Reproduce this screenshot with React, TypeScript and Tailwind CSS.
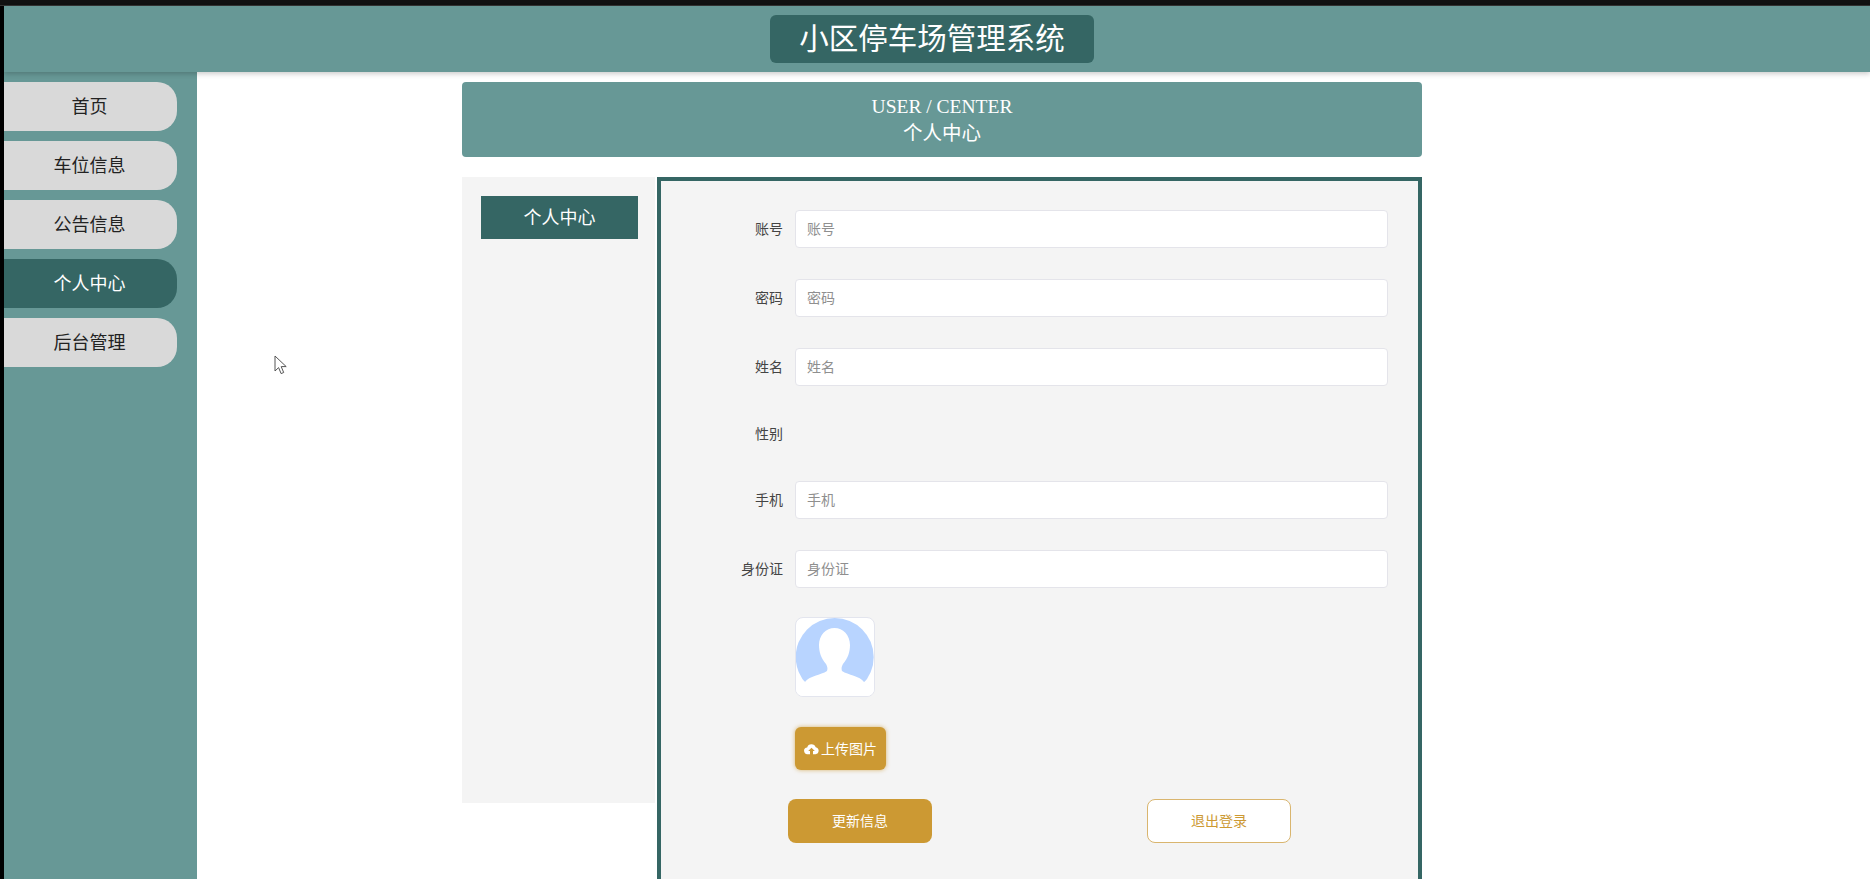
const navItems = ["首页", "车位信息", "公告信息", "个人中心", "后台管理"];

function Field({ label }: { label: string }) {
  return (
    <div className="flex h-[38px] items-center">
      <label className="w-[125px] pr-[12px] text-right text-sm text-[#444]">{label}</label>
      <input
        placeholder={label}
        className="h-[38px] w-[593px] rounded-[4px] border border-[#e4e4ea] bg-white px-[11px] text-sm text-[#333] outline-none placeholder:text-[#8f8f8f]"
      />
    </div>
  );
}

function Avatar() {
  return (
    <div className="h-[80px] w-[80px] overflow-hidden rounded-[8px] border border-[#e3e5ee] bg-white">
      <svg viewBox="1 1 78 78" className="h-full w-full">
        <circle cx="39.7" cy="40" r="39" fill="#b8d4ff" />
        <path
          d="M10 65C14 59 26 58 32 54C33 51 32 49 31 47C26 41 24 35 24 28C24 18 31 11 39.5 11C48 11 55 18 55 28C55 35 53 41 48 47C47 49 46 51 47 54C53 58 65 59 69 65L80 60V80H0V60Z"
          fill="#fff"
        />
      </svg>
    </div>
  );
}

function CloudIcon() {
  return (
    <svg viewBox="0 0 16 12" className="h-[12px] w-[15px]" fill="#fff">
      <path d="M4 11.5a3.6 3.6 0 0 1-.6-7.2A4.8 4.8 0 0 1 12.5 4a3.8 3.8 0 0 1-.2 7.5H9.6V8.2h1.9L8 4.6 4.5 8.2h1.9v3.3z" />
    </svg>
  );
}

export default function App() {
  return (
    <div className="relative flex h-[879px] flex-col overflow-hidden bg-white font-['Liberation_Sans','Noto_Sans_CJK_SC',sans-serif]">
      <div className="h-[6px] shrink-0 border-b border-[#333] bg-[#111]" />
      <div className="flex min-h-0 flex-1">
        <div className="w-[4px] shrink-0 bg-black" />
        <div className="flex min-w-0 flex-1 flex-col">
          <header className="relative z-10 flex h-[66px] shrink-0 items-center bg-[#679896] pl-[766px] shadow-[0_2px_5px_rgba(0,0,0,0.2)]">
            <h1 className="flex h-[48px] w-[324px] items-center justify-center rounded-[6px] bg-[#356664] text-[29.5px] font-normal text-white">
              小区停车场管理系统
            </h1>
          </header>
          <div className="flex min-h-0 flex-1">
            <nav className="flex w-[193px] shrink-0 flex-col gap-[10px] bg-[#679896] pt-[10px]">
              {navItems.map((item) => (
                <a
                  key={item}
                  className={
                    item === "个人中心"
                      ? "flex h-[49px] w-[173px] items-center justify-center rounded-r-[20px] bg-[#356664] pr-[2px] text-lg text-white"
                      : "flex h-[49px] w-[173px] items-center justify-center rounded-r-[20px] bg-[#d9d9d9] pr-[2px] text-lg text-[#222]"
                  }
                >
                  {item}
                </a>
              ))}
            </nav>
            <main className="flex-1 pl-[265px] pt-[10px]">
              <div className="flex h-[75px] w-[960px] flex-col items-center justify-center rounded-[4px] bg-[#679896] text-white">
                <div className="font-['Liberation_Serif','Noto_Sans_CJK_SC',serif] text-[19.5px] leading-[27px]">USER / CENTER</div>
                <div className="text-[19.5px] leading-[27px]">个人中心</div>
              </div>
              <div className="mt-[20px] flex w-[960px] items-start">
                <aside className="h-[626px] w-[193px] shrink-0 bg-[#f4f4f4] pl-[19px] pt-[19px]">
                  <div className="flex h-[43px] w-[157px] items-center justify-center bg-[#356664] text-lg text-white">个人中心</div>
                </aside>
                <form className="ml-[2px] h-[800px] w-[765px] border-4 border-[#356664] bg-[#f4f4f4] pl-[9px] pt-[29px]">
                  <div className="flex flex-col gap-[31px]">
                    <Field label="账号" />
                    <Field label="密码" />
                    <Field label="姓名" />
                  </div>
                  <div className="flex h-[95px] items-center">
                    <label className="w-[125px] pr-[12px] text-right text-sm text-[#444]">性别</label>
                  </div>
                  <div className="flex flex-col gap-[31px]">
                    <Field label="手机" />
                    <Field label="身份证" />
                  </div>
                  <div className="ml-[125px] mt-[29px]">
                    <Avatar />
                  </div>
                  <button
                    type="button"
                    className="ml-[125px] mt-[30px] flex h-[43px] w-[91px] items-center justify-center gap-[2px] rounded-[6px] bg-[#cc9933] text-sm text-white shadow-[0_0_4px_rgba(204,153,51,0.7)]"
                  >
                    <CloudIcon />
                    上传图片
                  </button>
                  <div className="ml-[118px] mt-[29px] flex gap-[215px]">
                    <button type="button" className="h-[44px] w-[144px] rounded-[8px] bg-[#cc9933] text-sm text-white">更新信息</button>
                    <button type="button" className="h-[44px] w-[144px] rounded-[8px] border border-[#d9b56e] bg-white text-sm text-[#cc9933]">退出登录</button>
                  </div>
                </form>
              </div>
            </main>
          </div>
        </div>
      </div>
      <svg viewBox="0 0 14 20" className="absolute left-[274px] top-[355px] h-[20px] w-[14px]">
        <path d="M1 1v15l3.6-3.4 2.5 6 2.6-1.1-2.5-5.9h5z" fill="#fff" stroke="#555" strokeWidth="1" />
      </svg>
    </div>
  );
}
